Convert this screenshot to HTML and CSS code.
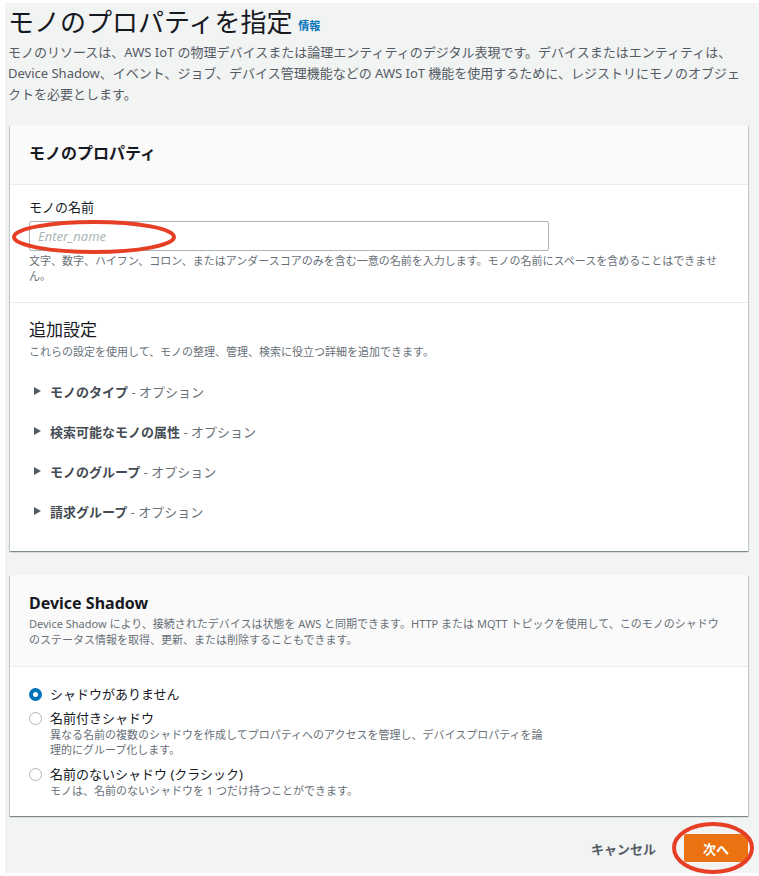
FILE: index.html
```html
<!DOCTYPE html>
<html lang="ja">
<head>
<meta charset="utf-8">
<title>モノのプロパティを指定</title>
<link rel="stylesheet" href="styles.css">
</head>
<body>
<div class="page">
  <header class="page-head">
    <h1 class="title">モノのプロパティを指定 <a class="info" href="#">情報</a></h1>
    <p class="lead">モノのリソースは、AWS IoT の物理デバイスまたは論理エンティティのデジタル表現です。デバイスまたはエンティティは、Device Shadow、イベント、ジョブ、デバイス管理機能などの AWS IoT 機能を使用するために、レジストリにモノのオブジェクトを必要とします。</p>
  </header>

  <section class="card">
    <div class="card-head"><h2 class="card-title">モノのプロパティ</h2></div>
    <div class="card-section name-section">
      <label class="field-label" for="name">モノの名前</label>
      <input id="name" class="text-input" type="text" placeholder="Enter_name">
      <p class="hint">文字、数字、ハイフン、コロン、またはアンダースコアのみを含む一意の名前を入力します。モノの名前にスペースを含めることはできません。</p>
    </div>
    <div class="card-section extra-section">
      <h3 class="sub-title">追加設定</h3>
      <p class="hint">これらの設定を使用して、モノの整理、管理、検索に役立つ詳細を追加できます。</p>
      <ul class="expanders">
        <li class="expander"><span class="caret"></span><b>モノのタイプ</b><span class="opt"> - オプション</span></li>
        <li class="expander"><span class="caret"></span><b>検索可能なモノの属性</b><span class="opt"> - オプション</span></li>
        <li class="expander"><span class="caret"></span><b>モノのグループ</b><span class="opt"> - オプション</span></li>
        <li class="expander"><span class="caret"></span><b>請求グループ</b><span class="opt"> - オプション</span></li>
      </ul>
    </div>
  </section>

  <section class="card shadow-card">
    <div class="card-head shadow-head">
      <h2 class="card-title latin">Device Shadow</h2>
      <p class="hint">Device Shadow により、接続されたデバイスは状態を AWS と同期できます。HTTP または MQTT トピックを使用して、このモノのシャドウのステータス情報を取得、更新、または削除することもできます。</p>
    </div>
    <div class="radios">
      <div class="radio-row">
        <span class="radio checked"></span>
        <div class="radio-text"><div class="radio-label">シャドウがありません</div></div>
      </div>
      <div class="radio-row">
        <span class="radio"></span>
        <div class="radio-text">
          <div class="radio-label">名前付きシャドウ</div>
          <div class="radio-desc">異なる名前の複数のシャドウを作成してプロパティへのアクセスを管理し、デバイスプロパティを論理的にグループ化します。</div>
        </div>
      </div>
      <div class="radio-row">
        <span class="radio"></span>
        <div class="radio-text">
          <div class="radio-label">名前のないシャドウ (クラシック)</div>
          <div class="radio-desc">モノは、名前のないシャドウを 1 つだけ持つことができます。</div>
        </div>
      </div>
    </div>
  </section>

  <footer class="actions">
    <button class="btn-link" type="button">キャンセル</button>
    <button class="btn-primary" type="button">次へ</button>
  </footer>
</div>

<svg class="mark mark-name" width="170" height="40" viewBox="0 0 170 40"><ellipse cx="85" cy="20" rx="80" ry="15" fill="none" stroke="#e63f26" stroke-width="4"/></svg>
<svg class="mark mark-next" width="90" height="58" viewBox="0 0 90 58"><ellipse cx="45" cy="29" rx="39" ry="24" fill="none" stroke="#e63f26" stroke-width="4"/></svg>
</body>
</html>
```

FILE: styles.css
```css
* { box-sizing: border-box; }

html, body {
  margin: 0;
  padding: 0;
  background: #ffffff;
}

body {
  font-family: "Noto Sans", "Noto Sans CJK JP", sans-serif;
  color: #16191f;
  width: 759px;
  height: 876px;
  overflow: hidden;
}

.page {
  margin: 3px 0 0 5px;
  height: 870px;
  background: #f2f3f3;
  padding: 2px 11px 0 5px;
  display: flex;
  flex-direction: column;
}

.page-head {
  margin-left: -2px;
  margin-right: 0;
}

.title {
  margin: 0;
  font-size: 26px;
  line-height: 32px;
  font-weight: 400;
  color: #16191f;
  font-family: "Noto Sans CJK JP", sans-serif;
}

.info {
  font-size: 11px;
  font-weight: 700;
  color: #0073bb;
  text-decoration: none;
  vertical-align: 2px;
}

.lead {
  margin: 1px 0 0;
  font-size: 13px;
  line-height: 21px;
  color: #545b64;
}

.card {
  background: #ffffff;
  margin-top: 20px;
  box-shadow: 0 1px 1px 0 rgba(0, 28, 36, 0.3), 1px 1px 1px 0 rgba(0, 28, 36, 0.15), -1px 1px 1px 0 rgba(0, 28, 36, 0.15);
}

.shadow-card {
  margin-top: 24px;
}

.card-head {
  background: #fafafa;
  border-bottom: 1px solid #eaeded;
  padding: 16px 19px 19px;
}

.card-title {
  margin: 0;
  font-size: 16px;
  line-height: 24px;
  font-weight: 700;
  color: #16191f;
}

.card-title.latin {
  line-height: 22px;
}

.card-section {
  padding: 12px 19px 19px;
}

.name-section {
  border-bottom: 1px solid #eaeded;
}

.field-label {
  display: block;
  font-size: 13px;
  line-height: 20px;
  color: #16191f;
}

.text-input {
  display: block;
  margin-top: 4px;
  width: 520px;
  height: 30px;
  border: 1px solid #aab7b8;
  border-radius: 2px;
  padding: 0 8px;
  font-family: "Noto Sans", "Noto Sans CJK JP", sans-serif;
  font-size: 13px;
  background: #ffffff;
}

.text-input::placeholder {
  color: #aab7b8;
  font-style: italic;
}

.hint {
  margin: 2px 0 0;
  font-size: 11px;
  line-height: 15px;
  color: #687078;
}

.extra-section {
  padding: 15px 19px 20px;
}

.extra-section .hint {
  line-height: 16px;
}

.sub-title {
  margin: 0;
  font-size: 17px;
  line-height: 24px;
  font-weight: 400;
  color: #16191f;
}

.expanders {
  list-style: none;
  margin: 11px 0 0;
  padding: 0;
}

.expander {
  height: 40px;
  display: flex;
  align-items: center;
  font-size: 13px;
  color: #545b64;
  padding-left: 5px;
}

.expander b {
  font-weight: 700;
  color: #444b53;
}

.opt {
  color: #687078;
  white-space: pre;
}

.caret {
  width: 0;
  height: 0;
  border-top: 4px solid transparent;
  border-bottom: 4px solid transparent;
  border-left: 7px solid #545b64;
  margin-right: 9px;
}

.shadow-head {
  padding-top: 17px;
  padding-bottom: 18px;
}

.shadow-head .hint {
  margin-top: 2px;
  line-height: 16px;
}

.radios {
  padding: 18px 19px 18px;
  display: flex;
  flex-direction: column;
  gap: 6px;
}

.radios .radio-row + .radio-row + .radio-row {
  margin-top: 2px;
}

.radio-row {
  display: flex;
  align-items: flex-start;
}

.radio {
  flex: none;
  width: 13px;
  height: 13px;
  border-radius: 50%;
  border: 1px solid #aab7b8;
  margin: 3px 8px 0 0;
  background: #ffffff;
}

.radio.checked {
  border: 4px solid #0073bb;
}

.radio-label {
  font-size: 13px;
  line-height: 18px;
  color: #16191f;
}

.radio-desc {
  font-size: 11px;
  line-height: 15px;
  color: #687078;
  max-width: 500px;
}

.actions {
  display: flex;
  justify-content: flex-end;
  align-items: center;
  margin-top: 18px;
  gap: 28px;
}

.btn-link {
  background: none;
  border: 0;
  padding: 0;
  font-family: "Noto Sans", "Noto Sans CJK JP", sans-serif;
  font-size: 13px;
  font-weight: 700;
  color: #545b64;
}

.btn-primary {
  width: 64px;
  height: 28px;
  background: #ec7211;
  border: 0;
  border-radius: 2px;
  color: #ffffff;
  font-family: "Noto Sans", "Noto Sans CJK JP", sans-serif;
  font-size: 13px;
  font-weight: 700;
}

.mark {
  position: absolute;
}

.mark-name {
  left: 9px;
  top: 217px;
}

.mark-next {
  left: 668px;
  top: 819px;
}
```
